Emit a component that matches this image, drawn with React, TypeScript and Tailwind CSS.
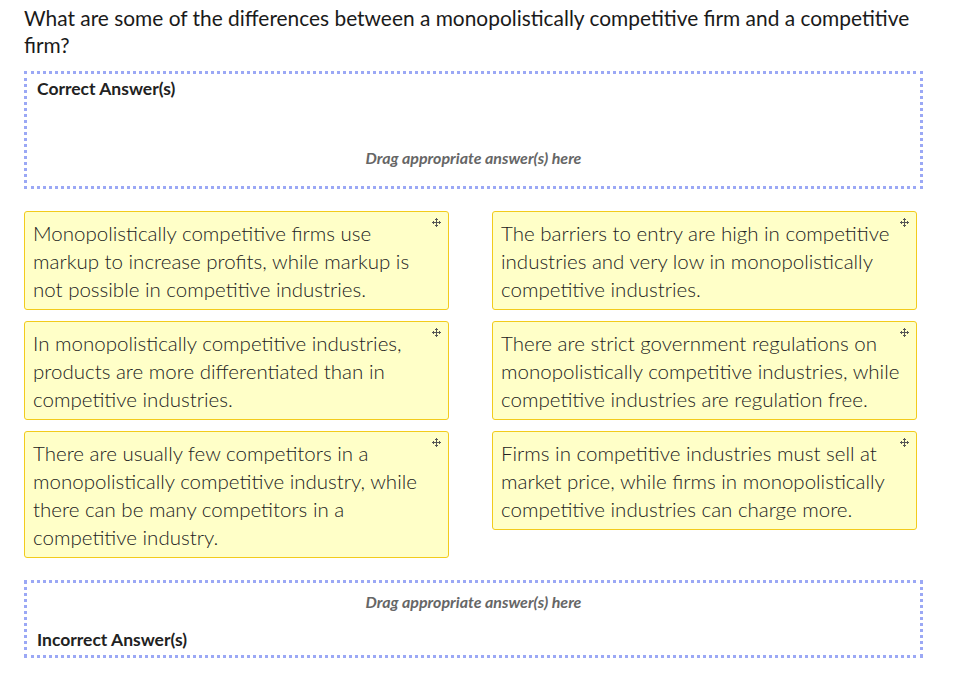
const cards: string[][] = [
  [
    "Monopolistically competitive firms use",
    "markup to increase profits, while markup is",
    "not possible in competitive industries.",
  ],
  [
    "The barriers to entry are high in competitive",
    "industries and very low in monopolistically",
    "competitive industries.",
  ],
  [
    "In monopolistically competitive industries,",
    "products are more differentiated than in",
    "competitive industries.",
  ],
  [
    "There are strict government regulations on",
    "monopolistically competitive industries, while",
    "competitive industries are regulation free.",
  ],
  [
    "There are usually few competitors in a",
    "monopolistically competitive industry, while",
    "there can be many competitors in a",
    "competitive industry.",
  ],
  [
    "Firms in competitive industries must sell at",
    "market price, while firms in monopolistically",
    "competitive industries can charge more.",
  ],
];

function MoveIcon() {
  return (
    <svg width="9" height="9" viewBox="0 0 9 9" className="text-[#555]" fill="currentColor">
      <rect x="4" y="1" width="1" height="7" />
      <rect x="1" y="4" width="7" height="1" />
      <rect x="3" y="1" width="3" height="1" />
      <rect x="4" y="0" width="1" height="1" />
      <rect x="3" y="7" width="3" height="1" />
      <rect x="4" y="8" width="1" height="1" />
      <rect x="1" y="3" width="1" height="3" />
      <rect x="0" y="4" width="1" height="1" />
      <rect x="7" y="3" width="1" height="3" />
      <rect x="8" y="4" width="1" height="1" />
    </svg>
  );
}

function Card({ lines }: { lines: string[] }) {
  return (
    <div className="relative rounded-[3px] border border-[#f2cb1d] bg-[#ffffc8] pt-[7px] pb-[6px] pl-[8px] pr-[20px]">
      <div className="absolute right-[7px] top-[6px]">
        <MoveIcon />
      </div>
      {lines.map((l) => (
        <div key={l} className="whitespace-nowrap text-[20.5px] leading-[28px] font-light text-[#222]">
          {l}
        </div>
      ))}
    </div>
  );
}

function DropZone({ label, labelFirst }: { label: string; labelFirst: boolean }) {
  const drag = (
    <p className="text-center text-[16px] font-bold italic text-[#666]">Drag appropriate answer(s) here</p>
  );
  const title = <p className="text-[17.5px] font-bold text-[#222]">{label}</p>;
  return (
    <div className="w-[899px] border-[3px] border-dotted border-[#9ba8f5] px-[10px]">
      {labelFirst ? (
        <div className="flex h-[112px] flex-col pt-[2px]">
          {title}
          <div className="mt-[44px]">{drag}</div>
        </div>
      ) : (
        <div className="flex h-[72px] flex-col pt-[7px]">
          {drag}
          <div className="mt-[13px]">{title}</div>
        </div>
      )}
    </div>
  );
}

export default function App() {
  return (
    <div className="min-h-screen bg-white pl-[24px] pt-[4px]" style={{ fontFamily: "Lato, 'Noto Sans', sans-serif" }}>
      <h1 className="text-[20.9px] leading-[27px] font-normal text-[#1a1a1a]">
        What are some of the differences between a monopolistically competitive firm and a competitive
        <br />
        firm?
      </h1>
      <div className="mt-[13px]">
        <DropZone label="Correct Answer(s)" labelFirst />
      </div>
      <div className="mt-[22px] grid w-[893px] grid-cols-[425px_425px] items-start gap-x-[43px] gap-y-[11px]">
        {cards.map((c, i) => (
          <Card key={i} lines={c} />
        ))}
      </div>
      <div className="mt-[22px]">
        <DropZone label="Incorrect Answer(s)" labelFirst={false} />
      </div>
    </div>
  );
}
